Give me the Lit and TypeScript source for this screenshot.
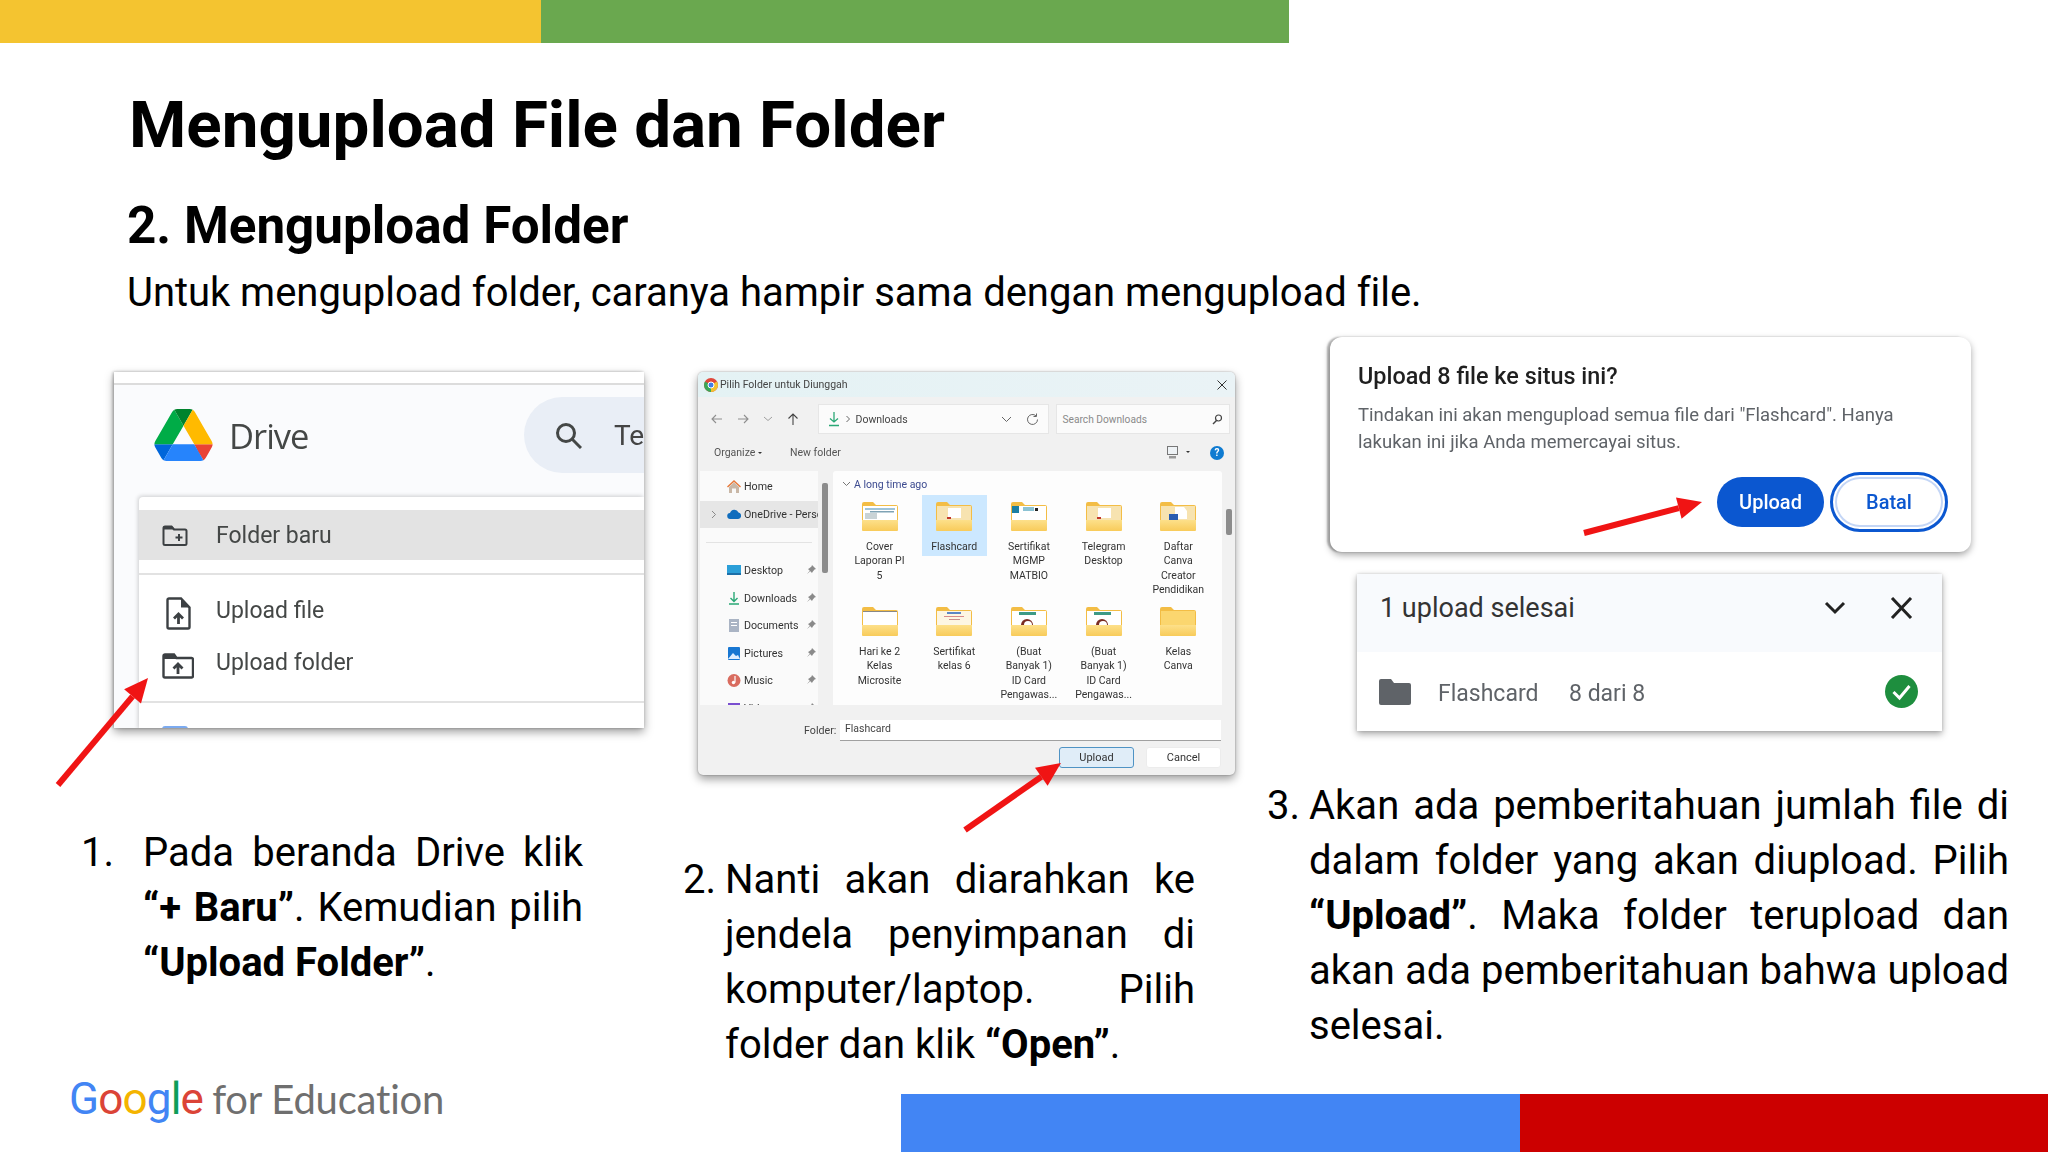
import { LitElement, html, css, svg } from "lit";
import { customElement } from "lit/decorators.js";

const folderThumbs: Record<string, unknown> = {
  cover: svg`<rect x="1" y="4" width="34" height="14" fill="#fff"/><rect x="3" y="6" width="30" height="2" fill="#9fc4d8"/><rect x="8" y="9" width="24" height="1.5" fill="#7fa3b5"/><rect x="3" y="11" width="12" height="6" fill="#c9d3d6"/>`,
  flash: svg`<rect x="1" y="4" width="34" height="14" fill="#f7e3b0"/><rect x="12" y="6" width="13" height="10" fill="#fff"/><rect x="11" y="15" width="4" height="2" fill="#c0392b"/>`,
  cert: svg`<rect x="1" y="4" width="34" height="14" fill="#fff"/><rect x="1" y="4" width="7" height="7" fill="#1c7fa3"/><rect x="12" y="5" width="11" height="4" fill="#8cc3d4"/><rect x="24" y="6" width="3" height="3" fill="#222"/>`,
  daftar: svg`<rect x="1" y="4" width="34" height="14" fill="#f7e3b0"/><path d="M15 5h9l3 4v8H15z" fill="#fff"/><rect x="9" y="12" width="9" height="6" fill="#2a5db0"/>`,
  hari: svg`<rect x="1" y="4" width="34" height="14" fill="#fff"/><rect x="1" y="4" width="34" height="1" fill="#888"/>`,
  sert6: svg`<rect x="1" y="4" width="34" height="14" fill="#fdf6e3"/><rect x="11" y="5" width="14" height="2" fill="#5c86c4"/><rect x="8" y="9" width="20" height="1" fill="#d98a8a"/><rect x="13" y="12" width="11" height="1" fill="#c98c8c"/>`,
  buat: svg`<rect x="1" y="4" width="34" height="14" fill="#fff"/><rect x="8" y="5" width="17" height="3" fill="#3d9a86"/><path d="M10 18a6 6 0 0 1 12 0z" fill="#7a2c22"/><path d="M13 18a4 4 0 0 1 8 0z" fill="#fff"/>`,
  none: svg`<rect x="1" y="4" width="34" height="14" fill="#fbd66f"/>`,
};

const folders = [
  { t: ["Cover", "Laporan PI", "5"], k: "cover" },
  { t: ["Flashcard"], k: "flash", sel: true },
  { t: ["Sertifikat", "MGMP", "MATBIO"], k: "cert" },
  { t: ["Telegram", "Desktop"], k: "flash" },
  { t: ["Daftar", "Canva", "Creator", "Pendidikan"], k: "daftar" },
  { t: ["Hari ke 2", "Kelas", "Microsite"], k: "hari" },
  { t: ["Sertifikat", "kelas 6"], k: "sert6" },
  { t: ["(Buat", "Banyak 1)", "ID Card", "Pengawas..."], k: "buat" },
  { t: ["(Buat", "Banyak 1)", "ID Card", "Pengawas..."], k: "buat" },
  { t: ["Kelas", "Canva"], k: "none" },
];

const navIcon: Record<string, unknown> = {
  home: svg`<path d="M7 1 0 7.5l1 1L7 3l6 5.5 1-1z" fill="#e8793a"/><path d="M2 8l5-4.5L12 8v6H9V9.5H5V14H2z" fill="#c9b7a6"/>`,
  cloud: svg`<path d="M3.5 12a3 3 0 0 1-.5-6 4.5 4.5 0 0 1 8.5-.5 3.3 3.3 0 0 1-.3 6.500z" fill="#0f6cbd"/>`,
  desk: svg`<rect y="2" width="14" height="10" fill="#2b9fd8"/><rect y="10" width="14" height="2" fill="#1c6fa8"/>`,
  down: svg`<path d="M7 1v9M3.500 7 7 10.500 10.500 7M2 13h10" fill="none" stroke="#2aa876" stroke-width="1.400"/>`,
  doc: svg`<rect x="2" y="1" width="10" height="13" fill="#aab4c4"/><rect x="4" y="4" width="6" height="1" fill="#fff"/><rect x="4" y="7" width="6" height="1" fill="#fff"/>`,
  pic: svg`<rect x="1" y="1" width="12" height="13" rx="1" fill="#1877d2"/><path d="M1 13 6 7l3 3 2-1 2 4z" fill="#dfeeff"/>`,
  music: svg`<circle cx="7" cy="7.500" r="6.500" fill="#d96c5f"/><path d="M8 3v6.500" stroke="#fff" stroke-width="1.200"/><circle cx="6.500" cy="9.500" r="1.700" fill="#fff"/>`,
  vid: svg`<rect x="1" y="2" width="12" height="10" fill="#7a4fd0"/>`,
};

const pin = svg`<svg class="pin" width="9" height="10" viewBox="0 0 9 10"><path d="M5 0 9 4 7.500 4.500 5.500 7 5 8 1 4 2 3.500 4.500 1.500zM2.500 6 0 9l3-2.500z" fill="#8a8a8a"/></svg>`;

const nav = [
  { t: "Desktop", i: "desk" },
  { t: "Downloads", i: "down" },
  { t: "Documents", i: "doc" },
  { t: "Pictures", i: "pic" },
  { t: "Music", i: "music" },
  { t: "Videos", i: "vid" },
];

@customElement("app-root")
export class AppRoot extends LitElement {
  static styles = css`
    :host { display: block; width: 2048px; height: 1152px; overflow: hidden; background: #fff; font-family: Roboto, "Liberation Sans", sans-serif; color: #000; }
    .slide { position: relative; width: 2048px; height: 1152px; display: flex; flex-direction: column; }
    .topbar { display: flex; height: 43px; flex: none; }
    .yellow { width: 541px; background: #f4c430; }
    .green { width: 748px; background: #6aa84f; }
    header { padding: 44px 0 0 127px; }
    h1 { margin: 0 0 0 2px; font-size: 65.500px; line-height: 76px; font-weight: 700; }
    h2 { margin: 33px 0 0; font-size: 51.200px; line-height: 60px; font-weight: 700; }
    .lead { margin: 12px 0 0; font-size: 40px; line-height: 50px; letter-spacing: -.04px; }
    .cols { display: grid; grid-template-columns: 602px 584px 781px; padding: 19px 0 0 81px; }
    .col { display: flex; flex-direction: column; align-items: flex-start; }
    .col1 { padding-top: 35px; }
    .col2 { padding-top: 35px; }
    .step { display: flex; font-size: 40px; line-height: 55px; }
    .step .n { flex: none; }
    .step .tx { text-align: justify; }
    .step1 { margin-top: 97px; }
    .step1 .n { width: 62px; }
    .step1 .tx { width: 440px; }
    .step2 { margin-top: 77px; }
    .step2 .n { width: 42px; }
    .step2 .tx { width: 470px; }
    .step3 { margin-top: 47px; }
    .step3 .n { width: 42px; }
    .step3 .tx { width: 700px; }

    .shot { filter: blur(0.4px); overflow: hidden; background: #fff; }
    .drive { margin-left: 33px; width: 530px; height: 356px; display: flex; flex-direction: column; background: #fafbfd; box-shadow: 0 4px 9px rgba(0,0,0,.38), -1px 0 3px rgba(0,0,0,.3); }
    .drive-top { height: 11px; background: #fff; border-bottom: 2px solid #dcdcdc; flex: none; }
    .drive-head { height: 112px; flex: none; display: flex; align-items: flex-start; }
    .logo { width: 59px; height: 52px; margin: 24px 0 0 40px; flex: none; }
    .drive-name { margin: 28px 0 0 16px; font-size: 34.500px; line-height: 46px; color: #444746; font-family: "Open Sans", Roboto, sans-serif; letter-spacing: -1px; }
    .pill { margin: 12px 0 0 auto; width: 120px; flex: none; height: 76px; border-radius: 38px 0 0 38px; background: #e9eef6; display: flex; align-items: center; padding-left: 31px; box-sizing: border-box; gap: 32px; font-size: 28px; color: #444; overflow: hidden; white-space: nowrap; }
    .pill svg { flex: none; }
    .menu { margin-left: 25px; flex: 1; background: #fff; box-shadow: -1px -1px 4px rgba(0,0,0,.18); padding-top: 13px; border-top-left-radius: 4px; font-size: 23px; color: #444746; }
    .mrow { display: flex; align-items: center; height: 52px; padding-left: 23px; }
    .mrow .ic { width: 54px; flex: none; display: flex; margin-top: 7px; }
    .mrow.hl { height: 50px; background: #e3e3e3; }
    .mrow.hl .ic { margin-top: 0; }
    .mhr { height: 2px; background: #e2e2e2; }
    .mhr.a { margin: 13px 0 9px; }
    .mhr.b { margin-top: 13px; }
    .bluebit { margin: 23px 0 0 23px; width: 26px; height: 4px; background: #7baaf0; border-radius: 3px 3px 0 0; }

    .win { margin-left: 15px; width: 537px; height: 403px; background: #f1f1f1; border-radius: 5px; display: flex; flex-direction: column; box-shadow: 0 4px 10px rgba(0,0,0,.4), 0 0 2px rgba(0,0,0,.35); font-size: 10.700px; color: #333; }
    .wtitle { height: 25px; flex: none; display: flex; align-items: center; padding: 0 8px 0 6px; gap: 2px; background: linear-gradient(90deg,#e4f2f4,#eaf3f6); font-size: 10.500px; color: #444; }
    .wtitle .x { margin-left: auto; display: flex; }
    .waddr { display: flex; margin-top: 7px; height: 30px; align-items: center; padding-left: 12px; }
    .navs { display: flex; gap: 12px; width: 107.500px; align-items: center; flex: none; }
    .box { height: 30px; box-sizing: border-box; background: #fbfbfb; border: 1px solid #e6e6e6; display: flex; align-items: center; flex: none; }
    .addrbox { width: 231px; padding: 0 9px; gap: 5px; color: #444; font-size: 10.500px; }
    .addrbox .end { margin-left: auto; display: flex; gap: 14px; align-items: center; }
    .searchbox { width: 174px; margin-left: 7px; padding: 0 6px; color: #8a8a8a; justify-content: space-between; font-size: 10.200px; }
    .wtool { height: 37px; flex: none; display: flex; align-items: center; padding: 0 11px 0 16px; color: #555; font-size: 10.500px; }
    .wtool .org { width: 76px; }
    .caret { display: inline-block; border: 2.500px solid transparent; border-top-color: #333; border-bottom: 0; margin: 0 0 2px 3px; }
    .wtool .view { margin-left: auto; display: flex; align-items: center; gap: 5px; margin-right: 20px; }
    .help { width: 14px; height: 14px; border-radius: 50%; background: #0f7bd1; color: #fff; font-size: 10px; font-weight: 700; display: flex; align-items: center; justify-content: center; }
    .panes { height: 234px; flex: none; display: flex; padding-left: 2px; }
    .nav { width: 118px; flex: none; background: #fafafa; overflow: hidden; padding-top: 2px; box-sizing: border-box; }
    .nrow { height: 27.500px; display: flex; align-items: center; padding-left: 27px; white-space: nowrap; position: relative; }
    .nrow svg.ni { width: 14px; height: 15px; margin-right: 3px; flex: none; }
    .nrow .pin { position: absolute; left: 107px; top: 8px; width: 9px; }
    .nrow.sel { background: #e6e6e6; }
    .nrow .chev { position: absolute; left: 11px; top: 9px; }
    .nsep { height: 1px; background: #e3e3e3; margin: 14px 6px 14px 6px; }
    .sb { width: 6px; background: #8c8c8c; border-radius: 2px; flex: none; }
    .sb1 { margin: 12px 5px 0 4px; height: 90px; }
    .main { width: 389px; flex: none; background: #fdfdfd; padding: 5px 0 0 9px; box-sizing: border-box; overflow: hidden; border-radius: 3px 3px 0 0; }
    .sec { height: 16px; display: flex; align-items: center; gap: 3px; color: #3c4a8f; font-size: 10.500px; }
    .grid { display: grid; grid-template-columns: repeat(5, 74.700px); margin-top: 3px; row-gap: 1px; }
    .fitem { width: 65px; margin-left: 5px; box-sizing: border-box; padding: 7px 0 2px; display: flex; flex-direction: column; align-items: center; text-align: center; font-size: 10.500px; line-height: 14.300px; color: #333; align-self: start; white-space: nowrap; }
    .fitem.sel { background: #cce8ff; }
    .fitem svg { margin-bottom: 9px; }
    .sb2 { margin: 38px 0 0 4px; height: 26px; }
    .wfoot { flex: 1; display: flex; flex-direction: column; }
    .frow { display: flex; align-items: center; margin-top: 15px; height: 21px; padding-left: 106px; color: #444; }
    .frow .lb { width: 36px; }
    .input { width: 381px; height: 21px; box-sizing: border-box; background: #fff; border-bottom: 1px solid #a0a0a0; padding-left: 5px; line-height: 17px; font-size: 10.500px; }
    .brow { display: flex; justify-content: flex-end; gap: 12px; margin-top: 6px; padding-right: 14px; }
    .btn { width: 75px; height: 21px; box-sizing: border-box; background: #fff; border: 1px solid #ececec; border-radius: 3px; display: flex; align-items: center; justify-content: center; font-size: 11px; color: #333; }
    .btn.def { background: #e0edf8; border-color: #4f93c4; }

    .card { margin-left: 63px; width: 641px; height: 215px; background: #fff; border-radius: 12px; box-shadow: 0 3px 7px rgba(0,0,0,.35), -3px 0 2px rgba(0,0,0,.28); box-sizing: border-box; padding: 25px 28px 0; display: flex; flex-direction: column; filter: blur(0.3px); }
    .card h3 { margin: 0; font-size: 23.400px; line-height: 28px; font-weight: 500; color: #1f1f1f; }
    .card p { margin: 12px 0 0; font-size: 18.500px; line-height: 26.500px; color: #5f6368; }
    .actions { display: flex; gap: 6px; align-items: center; margin: 17px 0 0 359px; }
    .pbtn { height: 50px; width: 107px; border-radius: 25px; display: flex; align-items: center; justify-content: center; font-size: 20px; font-weight: 500; background: #0b57d0; color: #fff; flex: none; }
    .pbtn.ghost { width: 118px; height: 60px; border-radius: 30px; background: #fff; color: #0b57d0; box-sizing: border-box; border: 3px solid #0b57d0; box-shadow: inset 0 0 0 2px #fff, inset 0 0 0 4px #c4d6f6; }
    .done { margin: 22px 0 0 90px; width: 585px; height: 157px; background: #fff; box-shadow: 0 3px 7px rgba(0,0,0,.35), 0 0 3px rgba(0,0,0,.15); display: flex; flex-direction: column; filter: blur(0.3px); }
    .dhead { height: 78px; flex: none; background: #f8fafd; display: flex; align-items: center; padding: 0 29px 10px 23px; font-size: 27px; color: #333; box-sizing: border-box; }
    .dhead .chv { margin-left: auto; display: flex; margin-right: 44px; }
    .drow { flex: 1; display: flex; align-items: center; padding: 0 24px 0 22px; font-size: 23px; color: #5f6368; }
    .drow .nm { margin-left: 27px; width: 131px; position: relative; top: 2px; }
    .drow .ct { position: relative; top: 2px; }
    .drow .ok { margin-left: auto; display: flex; }

    .footer { margin-top: auto; display: flex; align-items: flex-end; height: 77px; flex: none; }
    .brand { width: 901px; flex: none; box-sizing: border-box; padding: 0 0 29px 69px; display: flex; align-items: baseline; white-space: nowrap; line-height: 48px; }
    .g { font-family: Roboto, sans-serif; font-size: 44px; letter-spacing: -.8px; font-weight: 400; }
    .edu { font-family: Lato, sans-serif; font-size: 40px; color: #6f6f6f; margin-left: 9px; letter-spacing: -.2px; }
    .c1 { color: #4285f4; } .c2 { color: #db4437; } .c3 { color: #f4b400; } .c4 { color: #0f9d58; }
    .blue { width: 619px; height: 58px; background: #4285f4; flex: none; }
    .red { width: 528px; height: 58px; background: #cc0000; flex: none; }
    .arrows { position: absolute; left: 0; top: 0; pointer-events: none; }
  `;

  folderIcon(k: string) {
    return html`<svg width="36" height="29" viewBox="0 0 36 29">
      <defs><linearGradient id="fg" x1="0" y1="0" x2="0" y2="1"><stop offset="0" stop-color="#fde08a"/><stop offset="1" stop-color="#f8cb5a"/></linearGradient></defs>
      <path d="M0 2a2 2 0 0 1 2-2h9l3 3h20a2 2 0 0 1 2 2v22H0z" fill="#f3bd45"/>
      ${folderThumbs[k]}
      <path d="M0 18h36v10a1 1 0 0 1-1 1H1a1 1 0 0 1-1-1z" fill="url(#fg)"/>
    </svg>`;
  }

  renderDrive() {
    return html`<div class="shot drive">
      <div class="drive-top"></div>
      <div class="drive-head">
        <svg class="logo" viewBox="0 0 87.300 78">
          <path d="m6.600 66.850 3.850 6.650c.8 1.400 1.950 2.500 3.300 3.300l13.750-23.800h-27.500c0 1.550.4 3.100 1.200 4.500z" fill="#0066da"/>
          <path d="m43.650 25-13.750-23.800c-1.350.8-2.500 1.900-3.300 3.300l-25.400 44a9.060 9.060 0 0 0 -1.200 4.500h27.500z" fill="#00ac47"/>
          <path d="m73.550 76.800c1.350-.8 2.500-1.900 3.300-3.300l1.600-2.750 7.650-13.250c.8-1.400 1.200-2.950 1.200-4.500h-27.502l5.852 11.500z" fill="#ea4335"/>
          <path d="m43.650 25 13.750-23.800c-1.350-.8-2.900-1.200-4.500-1.200h-18.500c-1.600 0-3.150.45-4.500 1.200z" fill="#00832d"/>
          <path d="m59.800 53h-32.300l-13.750 23.800c1.350.8 2.900 1.200 4.500 1.200h50.800c1.600 0 3.150-.45 4.500-1.200z" fill="#2684fc"/>
          <path d="m73.400 26.500-12.700-22c-.8-1.400-1.950-2.500-3.300-3.300l-13.750 23.800 16.150 28h27.450c0-1.550-.4-3.100-1.200-4.500z" fill="#ffba00"/>
        </svg>
        <div class="drive-name">Drive</div>
        <div class="pill">
          <svg width="27" height="27" viewBox="0 0 27 27"><circle cx="11" cy="11" r="8.500" fill="none" stroke="#444746" stroke-width="3"/><path d="M17 17l9 9" stroke="#444746" stroke-width="3"/></svg>
          <span>Telusuri</span>
        </div>
      </div>
      <div class="menu">
        <div class="mrow hl">
          <span class="ic"><svg width="26" height="21" viewBox="0 0 26 21"><path d="M1.500 3a1.500 1.500 0 0 1 1.500-1.500h6.500l2.500 3h11a1.500 1.500 0 0 1 1.500 1.500v12.500a1.500 1.500 0 0 1-1.500 1.500H3a1.500 1.500 0 0 1-1.500-1.500z" fill="none" stroke="#3c4043" stroke-width="2"/><path d="M1 1.500h9.500l2.500 3H1z" fill="#3c4043"/><path d="M17 9v7M13.500 12.500h7" stroke="#3c4043" stroke-width="2"/></svg></span>
          <span class="tx">Folder baru</span>
        </div>
        <div class="mhr a"></div>
        <div class="mrow">
          <span class="ic"><svg style="margin-left:4px" width="25" height="33" viewBox="0 0 25 33"><path d="M1.500 3A1.500 1.500 0 0 1 3 1.500h12l8.500 9V30a1.500 1.500 0 0 1-1.500 1.500H3A1.500 1.500 0 0 1 1.500 30z" fill="none" stroke="#3c4043" stroke-width="2.400"/><path d="M15 1.500l8.500 9H15z" fill="#3c4043"/><path d="M12.500 27v-9M8 21.500l4.500-4.500 4.500 4.500" fill="none" stroke="#3c4043" stroke-width="2.800"/></svg></span>
          <span class="tx">Upload file</span>
        </div>
        <div class="mrow">
          <span class="ic"><svg width="32" height="26" viewBox="0 0 32 26"><path d="M1.500 3A1.500 1.500 0 0 1 3 1.500h9l2.500 3.500h15a1.500 1.500 0 0 1 1.500 1.500V23a1.500 1.500 0 0 1-1.500 1.500H3A1.500 1.500 0 0 1 1.500 23z" fill="none" stroke="#3c4043" stroke-width="2.400"/><path d="M1 1h11.500l3 5H1z" fill="#3c4043"/><path d="M16 21v-9M11.500 15.500L16 11l4.500 4.500" fill="none" stroke="#3c4043" stroke-width="2.800"/></svg></span>
          <span class="tx">Upload folder</span>
        </div>
        <div class="mhr b"></div>
        <div class="bluebit"></div>
      </div>
    </div>`;
  }

  renderWin() {
    const ar = (d: string, c = "#8f8f8f") => html`<svg width="14" height="14" viewBox="0 0 14 14"><path d="${d}" fill="none" stroke="${c}" stroke-width="1.100"/></svg>`;
    return html`<div class="shot win">
      <div class="wtitle">
        <svg width="14" height="14" viewBox="0 0 14 14"><circle cx="7" cy="7" r="7" fill="#e0473a"/><path d="M7 7 13 3.500A7 7 0 0 1 7 14z" fill="#f2c230"/><path d="M7 7 7 14A7 7 0 0 1 1 3.500z" fill="#3aa757"/><circle cx="7" cy="7" r="3" fill="#3f7de8" stroke="#fff"/></svg>
        <span>Pilih Folder untuk Diunggah</span>
        <span class="x"><svg width="10" height="10" viewBox="0 0 10 10"><path d="M.5.5l9 9M9.500.5l-9 9" stroke="#333" stroke-width="1"/></svg></span>
      </div>
      <div class="waddr">
        <div class="navs">
          ${ar("M12 7H2M6 3 2 7l4 4")}${ar("M2 7h10M8 3l4 4-4 4")}
          <svg width="12" height="14" viewBox="0 0 12 14"><path d="M2 5l4 3.500L10 5" fill="none" stroke="#a0a0a0" stroke-width="1"/></svg>
          ${ar("M7 13V2M2.500 6.500 7 2l4.500 4.500", "#444")}
        </div>
        <div class="box addrbox">
          <svg width="12" height="16" viewBox="0 0 12 16"><path d="M6 1v10M2 7.500 6 11l4-3.500M1 14.500h10" fill="none" stroke="#2aa876" stroke-width="1.300"/></svg>
          <svg width="6" height="8" viewBox="0 0 6 8"><path d="M1.500 1l3 3-3 3" fill="none" stroke="#666"/></svg>
          <span>Downloads</span>
          <span class="end">
            <svg width="11" height="7" viewBox="0 0 11 7"><path d="M1 1l4.500 4.500L10 1" fill="none" stroke="#666"/></svg>
            <svg width="13" height="13" viewBox="0 0 13 13"><path d="M11.500 6.500a5 5 0 1 1-1.500-3.600M10.500.5v3h-3" fill="none" stroke="#666"/></svg>
          </span>
        </div>
        <div class="box searchbox">
          <span>Search Downloads</span>
          <svg width="11" height="11" viewBox="0 0 11 11"><circle cx="6.500" cy="4" r="3" fill="none" stroke="#444" stroke-width="1.200"/><path d="M4.500 6.500 1 10" stroke="#444" stroke-width="1.500"/></svg>
        </div>
      </div>
      <div class="wtool">
        <span class="org">Organize<i class="caret"></i></span>
        <span>New folder</span>
        <span class="view"><svg width="11" height="13" viewBox="0 0 11 13"><rect x=".5" y=".5" width="10" height="8" fill="#eef2f5" stroke="#777"/><rect x="2" y="10" width="7" height="2.500" fill="#999"/></svg><i class="caret"></i></span>
        <span class="help">?</span>
      </div>
      <div class="panes">
        <div class="nav">
          <div class="nrow"><svg class="ni" viewBox="0 0 14 15">${navIcon.home}</svg>Home</div>
          <div class="nrow sel"><svg class="chev" width="6" height="9" viewBox="0 0 6 9"><path d="M1 1l3.500 3.500L1 8" fill="none" stroke="#888"/></svg><svg class="ni" viewBox="0 0 14 15">${navIcon.cloud}</svg>OneDrive - Personal</div>
          <div class="nsep"></div>
          ${nav.map((n) => html`<div class="nrow"><svg class="ni" viewBox="0 0 14 15">${navIcon[n.i]}</svg>${n.t}${pin}</div>`)}
        </div>
        <div class="sb sb1"></div>
        <div class="main">
          <div class="sec"><svg width="9" height="6" viewBox="0 0 9 6"><path d="M1 1l3.500 3.500L8 1" fill="none" stroke="#777"/></svg>A long time ago</div>
          <div class="grid">
            ${folders.map((f) => html`<div class="fitem ${f.sel ? "sel" : ""}">${this.folderIcon(f.k)}${f.t.map((l) => html`<span>${l}</span>`)}</div>`)}
          </div>
        </div>
        <div class="sb sb2"></div>
      </div>
      <div class="wfoot">
        <div class="frow"><span class="lb">Folder:</span><div class="input">Flashcard</div></div>
        <div class="brow"><div class="btn def">Upload</div><div class="btn">Cancel</div></div>
      </div>
    </div>`;
  }

  renderCards() {
    return html`<div class="card">
        <h3>Upload 8 file ke situs ini?</h3>
        <p>Tindakan ini akan mengupload semua file dari "Flashcard". Hanya<br />lakukan ini jika Anda memercayai situs.</p>
        <div class="actions"><div class="pbtn">Upload</div><div class="pbtn ghost">Batal</div></div>
      </div>
      <div class="done">
        <div class="dhead">
          <span>1 upload selesai</span>
          <span class="chv"><svg width="22" height="14" viewBox="0 0 22 14"><path d="M2 2l9 9 9-9" fill="none" stroke="#222" stroke-width="3"/></svg></span>
          <svg width="23" height="22" viewBox="0 0 23 22"><path d="M2 1l19 20M21 1 2 21" stroke="#222" stroke-width="3"/></svg>
        </div>
        <div class="drow">
          <svg width="32" height="26" viewBox="0 0 32 26"><path d="M0 2a2 2 0 0 1 2-2h10l3 4h15a2 2 0 0 1 2 2v18a2 2 0 0 1-2 2H2a2 2 0 0 1-2-2z" fill="#5f6368"/></svg>
          <span class="nm">Flashcard</span><span class="ct">8 dari 8</span>
          <span class="ok"><svg width="33" height="33" viewBox="0 0 33 33"><circle cx="16.500" cy="16.500" r="16.500" fill="#1e8e3e"/><path d="M8.500 17l6 6 10-12" fill="none" stroke="#fff" stroke-width="3"/></svg></span>
        </div>
      </div>`;
  }

  arrow(x1: number, y1: number, x2: number, y2: number) {
    const a = Math.atan2(y2 - y1, x2 - x1);
    const L = 24, W = 11;
    const bx = x2 - L * Math.cos(a), by = y2 - L * Math.sin(a);
    const px = -Math.sin(a) * W, py = Math.cos(a) * W;
    return svg`<line x1="${x1}" y1="${y1}" x2="${bx}" y2="${by}" stroke="#f01414" stroke-width="6"/>
      <polygon points="${x2},${y2} ${bx + px},${by + py} ${bx - px},${by - py}" fill="#f01414"/>`;
  }

  render() {
    return html`<div class="slide">
      <div class="topbar"><div class="yellow"></div><div class="green"></div></div>
      <header>
        <h1>Mengupload File dan Folder</h1>
        <h2>2. Mengupload Folder</h2>
        <p class="lead">Untuk mengupload folder, caranya hampir sama dengan mengupload file.</p>
      </header>
      <div class="cols">
        <div class="col col1">
          ${this.renderDrive()}
          <div class="step step1"><span class="n">1.</span><span class="tx">Pada beranda Drive klik <b>“+ Baru”</b>. Kemudian pilih <b>“Upload Folder”</b>.</span></div>
        </div>
        <div class="col col2">
          ${this.renderWin()}
          <div class="step step2"><span class="n">2.</span><span class="tx">Nanti akan diarahkan ke jendela penyimpanan di komputer/laptop. Pilih folder dan klik <b>“Open”</b>.</span></div>
        </div>
        <div class="col col3">
          ${this.renderCards()}
          <div class="step step3"><span class="n">3.</span><span class="tx">Akan ada pemberitahuan jumlah file di dalam folder yang akan diupload. Pilih <b>“Upload”</b>. Maka folder terupload dan akan ada pemberitahuan bahwa upload selesai.</span></div>
        </div>
      </div>
      <div class="footer">
        <div class="brand">
          <span class="g"><span class="c1">G</span><span class="c2">o</span><span class="c3">o</span><span class="c1">g</span><span class="c4">l</span><span class="c2">e</span></span>
          <span class="edu">for Education</span>
        </div>
        <div class="blue"></div><div class="red"></div>
      </div>
      <svg class="arrows" width="2048" height="1152" viewBox="0 0 2048 1152">
        ${this.arrow(58, 785, 148, 678)}
        ${this.arrow(965, 830, 1061, 763)}
        ${this.arrow(1584, 533, 1702, 502)}
      </svg>
    </div>`;
  }
}
